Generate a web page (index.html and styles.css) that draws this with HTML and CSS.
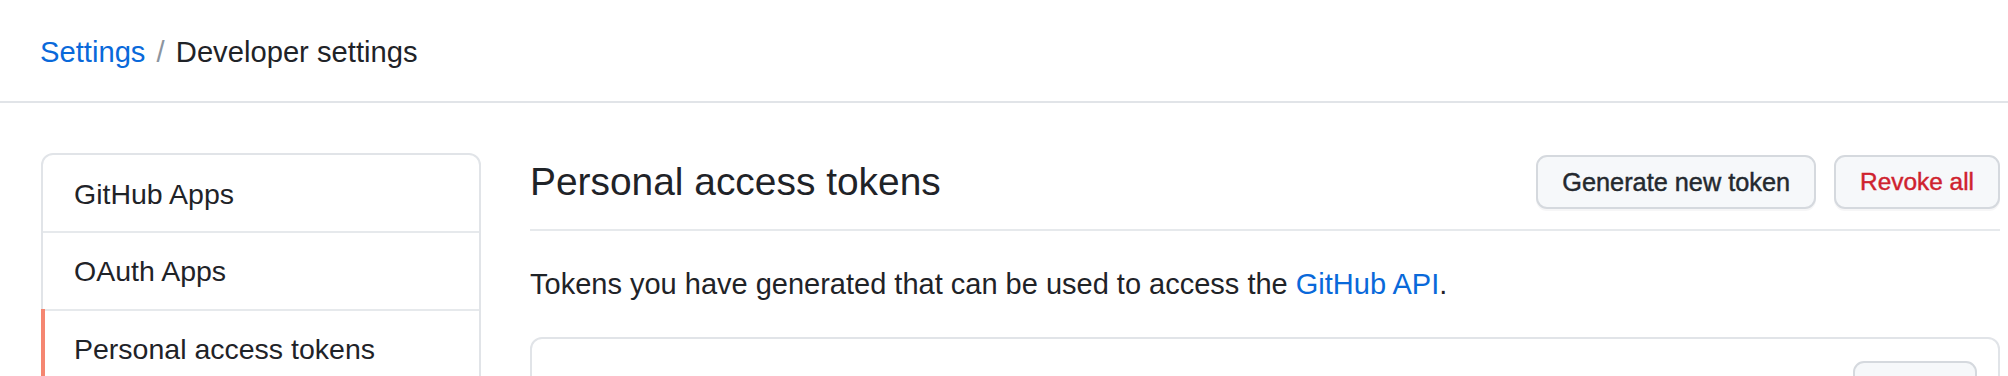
FILE: index.html
```html
<!DOCTYPE html>
<html lang="en">
<head>
    <meta charset="UTF-8">
    <meta name="viewport" content="width=device-width, initial-scale=1.0">
    <title>Personal access tokens</title>
    <link rel="stylesheet" href="styles.css">
</head>
<body>
    <header class="page-head">
        <nav class="breadcrumb">
            <a href="#">Settings</a>
            <span class="sep">/</span>
            <span class="current">Developer settings</span>
        </nav>
    </header>

    <div class="layout">
        <nav class="side-menu">
            <a class="menu-item" href="#">GitHub Apps</a>
            <a class="menu-item" href="#">OAuth Apps</a>
            <a class="menu-item selected" href="#">Personal access tokens</a>
        </nav>

        <main class="content">
            <div class="subhead">
                <h2>Personal access tokens</h2>
                <div class="actions">
                    <a class="btn" href="#">Generate new token</a>
                    <a class="btn btn-danger" href="#">Revoke all</a>
                </div>
            </div>

            <p class="note">Tokens you have generated that can be used to access the <a href="#">GitHub API</a>.</p>

            <div class="box">
                <div class="box-row">
                    <div class="token-info"></div>
                    <button class="btn btn-sm" aria-label="Delete"></button>
                </div>
            </div>
        </main>
    </div>
</body>
</html>
```

FILE: styles.css
```css
body {
    margin: 0;
    font-family: "Liberation Sans", Arial, sans-serif;
    font-size: 29px;
    line-height: 42px;
    color: #1f2328;
    background-color: #ffffff;
}

a {
    color: #0969da;
    text-decoration: none;
}

.page-head {
    height: 103px;
    display: flex;
    align-items: center;
    padding: 2px 0 0 40px;
    box-sizing: border-box;
    border-bottom: 2px solid #e1e4e8;
    font-size: 29.2px;
}

.breadcrumb .sep {
    color: #8c959f;
    margin: 0 3px;
}

.layout {
    display: flex;
    gap: 49px;
    padding: 50px 8px 0 41px;
}

.side-menu {
    width: 440px;
    flex-shrink: 0;
    border: 2px solid #e1e4e8;
    border-radius: 12px;
    box-sizing: border-box;
    align-self: flex-start;
    font-size: 28.5px;
}

.menu-item {
    position: relative;
    display: block;
    padding: 17px 32px 17px 31px;
    color: #1f2328;
    border-top: 2px solid #e6e9ec;
}

.menu-item:first-child {
    border-top: none;
    padding-top: 18px;
    padding-bottom: 16px;
}

.menu-item.selected::before {
    content: "";
    position: absolute;
    left: -2px;
    top: -2px;
    bottom: 0;
    width: 4px;
    background-color: #f58671;
}

.content {
    flex: 1;
    min-width: 0;
}

.subhead {
    display: flex;
    align-items: center;
    padding: 2px 0 20px;
    border-bottom: 2px solid #e6e9ec;
}

.subhead h2 {
    flex: 1;
    margin: 0;
    font-size: 38.9px;
    font-weight: normal;
    line-height: 48px;
}

.actions {
    display: flex;
    gap: 18px;
}

.btn {
    display: inline-block;
    padding: 10px 24px;
    font-family: inherit;
    font-size: 25.3px;
    font-weight: normal;
    -webkit-text-stroke: 0.45px currentColor;
    line-height: 30px;
    color: #24292f;
    background-color: #f6f8fa;
    border: 2px solid #d5d9de;
    border-radius: 11px;
    box-shadow: 0 2px 0 rgba(31, 35, 40, 0.04);
    cursor: pointer;
}

.btn-danger {
    color: #cf222e;
    font-size: 24.4px;
}

.note {
    margin: 32px 0;
}

.box {
    border: 2px solid #e1e4e8;
    border-radius: 12px;
}

.box-row {
    display: flex;
    align-items: flex-start;
    padding: 22px 21px 22px 32px;
}

.token-info {
    flex: 1;
}

.btn-sm {
    width: 124px;
    height: 54px;
    padding: 0;
}
```
